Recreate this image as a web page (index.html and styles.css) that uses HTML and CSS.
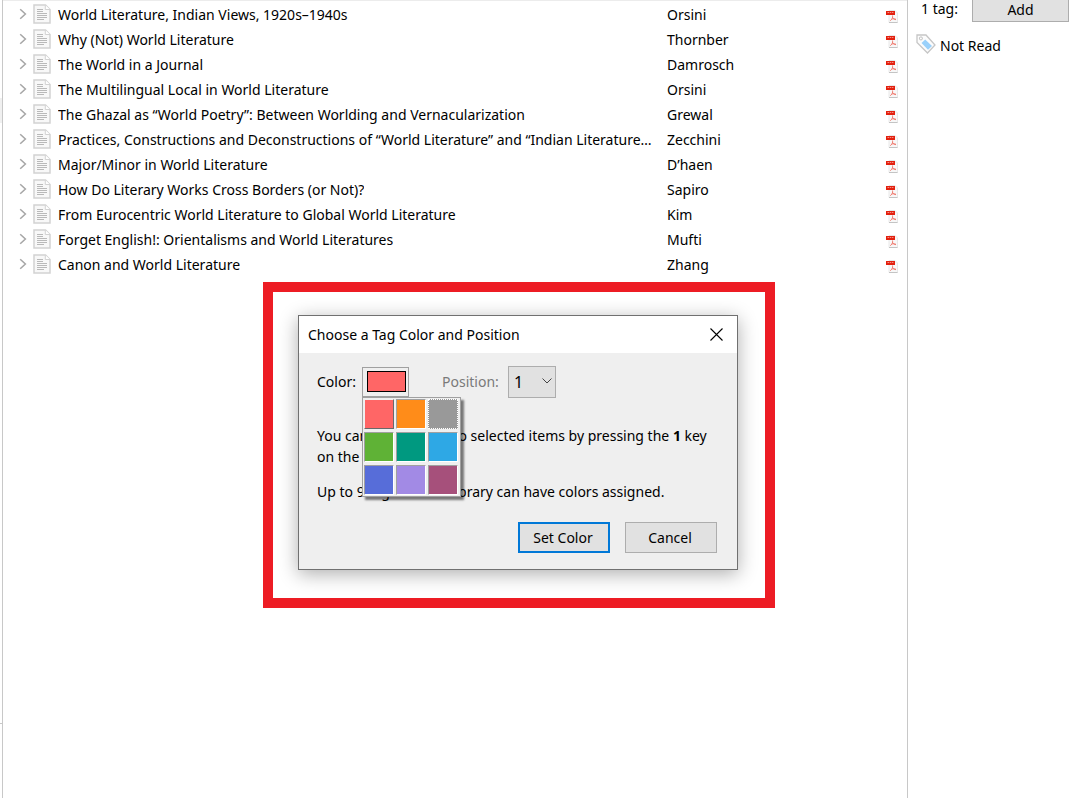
FILE: index.html
```html
<!DOCTYPE html>
<html lang="en">
<head>
<meta charset="utf-8">
<title>Library</title>
<link rel="stylesheet" href="styles.css">
</head>
<body>
<svg class="defs" aria-hidden="true">
  <symbol id="chevron" viewBox="0 0 8 12"><path d="M1.2 1.200 6.400 6 1.200 10.800" fill="none" stroke="#a6a6a6" stroke-width="1.500"/></symbol>
  <symbol id="doc" viewBox="0 0 18 20">
    <path d="M1 1h11.500L17 5.500V19H1z" fill="#f8f8f8" stroke="#d2d2d2" stroke-width="1.500"/>
    <path d="M12.300 1v4.500H17" fill="#fff" stroke="#d2d2d2"/>
    <path d="M4 5.500h6M4 7.500h6M4 9.500h10M4 11.500h10M4 13.500h10M4 15.500h7" stroke="#b9b9b9"/>
  </symbol>
  <symbol id="pdf" viewBox="0 0 12 13">
    <path d="M3 .5h6l2.500 2.500v9.500H3z" fill="#f8f8f8" stroke="#e8e8e8"/>
    <path d="M3 12.500h8.500" stroke="#c4c4c4"/>
    <path d="M0 1h9v4H0z" fill="#e3200e"/>
    <path d="M1.500 2.500h6" stroke="#f58a80" stroke-dasharray="1.500 .7"/>
    <path d="M6.500 5.500c.6 2-.5 4-2.300 5.200M6.700 7.500c.4 1.300 1.800 2 3.300 2.200M5.300 9.300c1.500-.7 3-.6 4.700 0" fill="none" stroke="#ee7468" stroke-width=".9"/>
  </symbol>
</svg>
<div class="app">
  <div class="edge"><div class="edge-row"></div><div class="edge-split"></div></div>
  <main class="items">
    <table class="list">
      <colgroup><col class="c-title"><col class="c-creator"><col class="c-file"></colgroup>
      <tbody>
        <tr><td><div class="cell"><svg class="chev"><use href="#chevron"/></svg><svg class="doc"><use href="#doc"/></svg><span class="name">World Literature, Indian Views, 1920s–1940s</span></div></td><td>Orsini</td><td><svg class="pdf"><use href="#pdf"/></svg></td></tr>
        <tr><td><div class="cell"><svg class="chev"><use href="#chevron"/></svg><svg class="doc"><use href="#doc"/></svg><span class="name">Why (Not) World Literature</span></div></td><td>Thornber</td><td><svg class="pdf"><use href="#pdf"/></svg></td></tr>
        <tr><td><div class="cell"><svg class="chev"><use href="#chevron"/></svg><svg class="doc"><use href="#doc"/></svg><span class="name">The World in a Journal</span></div></td><td>Damrosch</td><td><svg class="pdf"><use href="#pdf"/></svg></td></tr>
        <tr><td><div class="cell"><svg class="chev"><use href="#chevron"/></svg><svg class="doc"><use href="#doc"/></svg><span class="name">The Multilingual Local in World Literature</span></div></td><td>Orsini</td><td><svg class="pdf"><use href="#pdf"/></svg></td></tr>
        <tr><td><div class="cell"><svg class="chev"><use href="#chevron"/></svg><svg class="doc"><use href="#doc"/></svg><span class="name">The Ghazal as “World Poetry”: Between Worlding and Vernacularization</span></div></td><td>Grewal</td><td><svg class="pdf"><use href="#pdf"/></svg></td></tr>
        <tr><td><div class="cell"><svg class="chev"><use href="#chevron"/></svg><svg class="doc"><use href="#doc"/></svg><span class="name">Practices, Constructions and Deconstructions of “World Literature” and “Indian Literature…</span></div></td><td>Zecchini</td><td><svg class="pdf"><use href="#pdf"/></svg></td></tr>
        <tr><td><div class="cell"><svg class="chev"><use href="#chevron"/></svg><svg class="doc"><use href="#doc"/></svg><span class="name">Major/Minor in World Literature</span></div></td><td>D’haen</td><td><svg class="pdf"><use href="#pdf"/></svg></td></tr>
        <tr><td><div class="cell"><svg class="chev"><use href="#chevron"/></svg><svg class="doc"><use href="#doc"/></svg><span class="name">How Do Literary Works Cross Borders (or Not)?</span></div></td><td>Sapiro</td><td><svg class="pdf"><use href="#pdf"/></svg></td></tr>
        <tr><td><div class="cell"><svg class="chev"><use href="#chevron"/></svg><svg class="doc"><use href="#doc"/></svg><span class="name">From Eurocentric World Literature to Global World Literature</span></div></td><td>Kim</td><td><svg class="pdf"><use href="#pdf"/></svg></td></tr>
        <tr><td><div class="cell"><svg class="chev"><use href="#chevron"/></svg><svg class="doc"><use href="#doc"/></svg><span class="name">Forget English!: Orientalisms and World Literatures</span></div></td><td>Mufti</td><td><svg class="pdf"><use href="#pdf"/></svg></td></tr>
        <tr><td><div class="cell"><svg class="chev"><use href="#chevron"/></svg><svg class="doc"><use href="#doc"/></svg><span class="name">Canon and World Literature</span></div></td><td>Zhang</td><td><svg class="pdf"><use href="#pdf"/></svg></td></tr>
      </tbody>
    </table>
  </main>
  <aside class="tags">
    <div class="tags-head"><span>1 tag:</span><button class="btn add" type="button">Add</button></div>
    <div class="tag">
      <svg class="tag-icon" viewBox="0 0 20 20" aria-hidden="true">
        <path d="M1 1h9l9 10-7.500 8L1 8.500z" fill="#fcfcfc" stroke="#c6c6c6" stroke-width="1.300"/>
        <rect x="3.500" y="3" width="2.800" height="2.800" rx="1" fill="#fff" stroke="#bdbdbd"/>
        <path d="M9.200 5.500 16 12l-4 3.700L5.500 9z" fill="#9ad1fb"/>
      </svg>
      <span>Not Read</span>
    </div>
  </aside>
</div>

<div class="highlight">
  <div class="dialog" role="dialog" aria-labelledby="dialog-title">
    <header class="titlebar">
      <span id="dialog-title">Choose a Tag Color and Position</span>
      <button class="close" type="button" aria-label="Close"><svg viewBox="0 0 13 13"><path d="M.5.5l12 12M12.500.5l-12 12" stroke="#000" stroke-width="1.100"/></svg></button>
    </header>
    <div class="content">
      <div class="fields">
        <span id="color-label">Color:</span>
        <div class="picker">
          <button class="well" type="button" aria-labelledby="color-label"><span class="well-fill"></span></button>
          <div class="palette">
            <button class="swatch red" type="button" aria-label="Red"></button>
            <button class="swatch orange" type="button" aria-label="Orange"></button>
            <button class="swatch gray" type="button" aria-label="Gray"></button>
            <button class="swatch green" type="button" aria-label="Green"></button>
            <button class="swatch teal" type="button" aria-label="Teal"></button>
            <button class="swatch blue" type="button" aria-label="Blue"></button>
            <button class="swatch indigo" type="button" aria-label="Indigo"></button>
            <button class="swatch violet" type="button" aria-label="Violet"></button>
            <button class="swatch plum" type="button" aria-label="Plum"></button>
          </div>
        </div>
        <label class="pos-label" for="position">Position:</label>
        <div class="select">
          <select id="position"><option>1</option></select>
          <svg viewBox="0 0 10 6" aria-hidden="true"><path d="M.5.5 5 5 9.500.5" fill="none" stroke="#444"/></svg>
        </div>
      </div>
      <p class="first">You can add this tag to selected items by pressing the <b>1</b> key on the keyboard.</p>
      <p>Up to 9 tags in each library can have colors assigned.</p>
      <div class="actions">
        <button class="btn primary" type="button">Set Color</button>
        <button class="btn" type="button">Cancel</button>
      </div>
    </div>
  </div>
</div>
</body>
</html>
```
FILE: styles.css
```css
* { box-sizing: border-box; }
body {
  margin: 0;
  background: #fff;
  color: #000;
  font: 14px/20px "Noto Sans", "Open Sans", sans-serif;
  overflow: hidden;
}
button, select { font: inherit; color: inherit; margin: 0; }
svg { display: block; flex: none; }
.defs { position: absolute; width: 0; height: 0; }

.app { display: flex; height: 100vh; }
.edge {
  display: flex;
  flex-direction: column;
  width: 3px;
  padding-top: 98px;
  border-right: 1px solid #c8c8c8;
}
.edge-row { height: 25px; background: #f0f0f0; }
.edge-split { margin-top: 600px; height: 1px; background: #c8c8c8; }

.items { flex: 1; min-width: 0; padding-top: 1px; border-top: 1px solid #ececec; }
.list { width: 100%; table-layout: fixed; border-collapse: collapse; }
.c-creator { width: 218px; }
.c-file { width: 22px; }
.list td { height: 25px; padding: 1px 0 0; white-space: nowrap; }
.cell { display: flex; align-items: flex-start; height: 22px; padding-left: 16px; }
.name { overflow: hidden; padding-top: 1px; }
.chev { width: 8px; height: 12px; margin: 4px 6px 0 0; }
.doc { width: 18px; height: 20px; margin-right: 7px; }
.pdf { width: 12px; height: 13px; margin: 3px 0 0 1px; }

.tags { width: 162px; border-left: 1px solid #c8c8c8; }
.tags-head {
  display: flex;
  justify-content: space-between;
  padding-left: 13px;
  line-height: 18px;
}
.btn {
  width: 92px;
  height: 31px;
  padding: 0 2px 0 0;
  background: #e1e1e1;
  border: 1px solid #adadad;
}
.btn.primary { border: 2px solid #0078d7; }
.btn.add { width: 97px; height: 22px; padding: 0 0 2px; border-top: 0; line-height: 18px; }
.tag { display: flex; align-items: flex-start; gap: 4px; padding: 12px 0 0 8px; }
.tag span { padding-top: 2px; }
.tag-icon { width: 20px; height: 20px; }

.highlight {
  position: absolute;
  left: 263px;
  top: 282px;
  padding: 23px 27px 28px 25px;
  border: 10px solid #ed1c24;
  background: #fff;
}
.dialog {
  width: 440px;
  border: 1px solid #707070;
  background: #efefef;
  box-shadow: 0 4px 18px rgba(0, 0, 0, .32);
}
.titlebar {
  display: flex;
  align-items: center;
  justify-content: space-between;
  height: 37px;
  padding: 0 14px 0 9px;
  background: #fff;
}
.close { padding: 0; border: 0; background: none; }
.close svg { width: 13px; height: 13px; }
.content { padding: 13px 20px 16px 18px; }
.fields { display: flex; align-items: center; height: 32px; }
#color-label { width: 39px; }
.picker { position: relative; margin-left: 6px; }
.well {
  display: block;
  width: 47px;
  height: 30px;
  padding: 3px 2px 4px 4px;
  border: 1px solid #a0a0a0;
  background: #efefef;
}
.well-fill { display: block; height: 21px; border: 1px solid #000; background: #f66; }
.palette {
  position: absolute;
  left: 0;
  top: 30px;
  display: grid;
  grid-template-columns: repeat(3, 30px);
  gap: 3px 2px;
  padding: 1px 2px 1px 1px;
  border: 1px solid #a0a0a0;
  background: #efefef;
  box-shadow: 3px 3px 2px rgba(0, 0, 0, .5);
}
.swatch {
  height: 30px;
  padding: 0;
  border: 1px solid;
  border-color: #a0a0a0 #fff #fff #a0a0a0;
}
.red { background: #f66; border-color: #f0f0f0 #696969 #696969 #f0f0f0; }
.orange { background: #ff8c19; }
.gray { background: #999; border: 1px dotted #fff; }
.green { background: #5fb236; }
.teal { background: #009980; }
.blue { background: #2ea8e5; }
.indigo { background: #576dd9; }
.violet { background: #a28ae5; }
.plum { background: #a6507b; }
.pos-label { margin-left: 33px; color: #7a7a7a; }
.select { display: grid; align-items: center; margin-left: auto; margin-right: 161px; }
.select select {
  grid-area: 1 / 1;
  width: 48px;
  height: 32px;
  padding: 0 5px;
  appearance: none;
  background: #e1e1e1;
  border: 1px solid #adadad;
  border-radius: 0;
  font-size: 16px;
}
.select svg { grid-area: 1 / 1; justify-self: end; width: 10px; height: 6px; margin: 0 4px 2px 0; }
p { margin: 14px 0 0; line-height: 21px; }
p.first { margin-top: 27px; }
.actions { display: flex; justify-content: flex-end; gap: 15px; margin-top: 20px; }
```
